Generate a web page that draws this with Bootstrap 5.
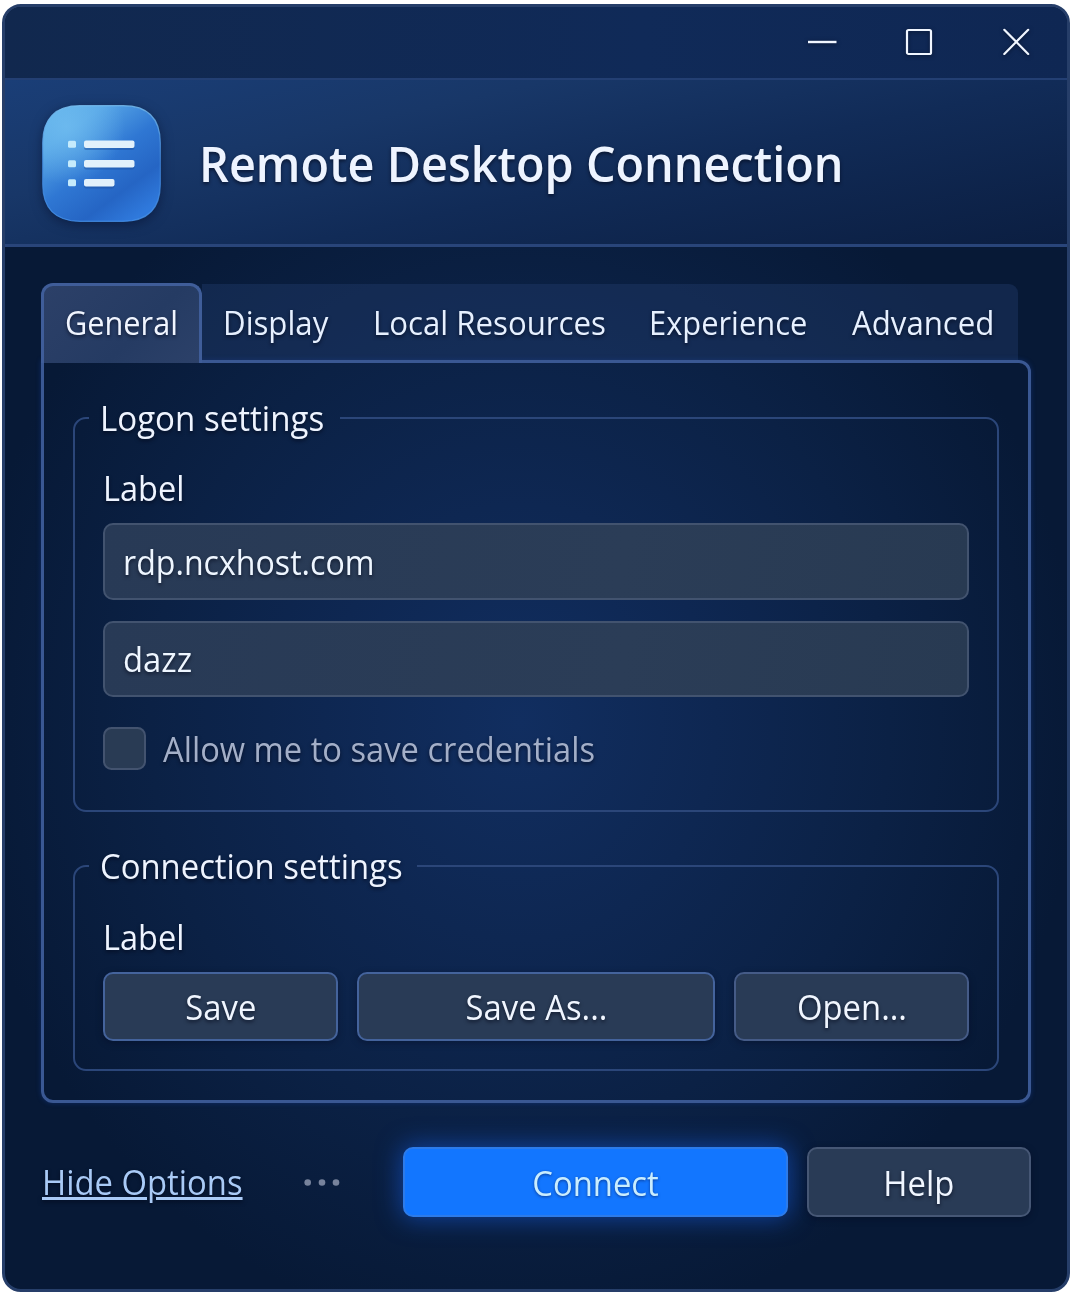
<!DOCTYPE html>
<html lang="en">
<head>
<meta charset="utf-8">
<meta name="viewport" content="width=device-width, initial-scale=1">
<title>Remote Desktop Connection</title>
<link href="https://cdn.jsdelivr.net/npm/bootstrap@5.3.0/dist/css/bootstrap.min.css" rel="stylesheet">
<style>
body{background:#fff;font-family:"Open Sans","Noto Sans",sans-serif;color:#eef4ff;overflow:hidden}
.rdp-window{width:1068px;height:1288px;margin:4px 0 0 2px;border:3px solid #263e69;border-radius:19px;
 background:radial-gradient(ellipse 560px 620px at 515px 715px,#112e60 0,#0e2752 35%,#0b2145 66%,rgba(7,26,54,0) 100%),#071936}
/* Segoe-like proportions: slightly condensed glyphs */
.seg{display:inline-block;white-space:nowrap;line-height:1;transform:scaleX(.965);transform-origin:left center;text-shadow:0 2px 4px rgba(0,5,20,.6)}
.seg-c{transform-origin:center}
.seg-n{transform:scaleX(.945)}
.titlebar{height:73px;background:linear-gradient(90deg,#11284e,#102a58 60%,#0f2753);border-bottom:2px solid #233f73;padding:0 35px 2px 0;gap:67px}
.win-btn{width:30px;height:30px;padding:0;border:0;background:none;line-height:0;filter:drop-shadow(0 1px 2px rgba(0,5,20,.6))}
.hero{height:167px;border-bottom:3px solid #29457a;padding:2px 0 0 37px;gap:38px;
 background:linear-gradient(168deg,#1a3e77 0,#183768 30%,#112b57 58%,#0b1e41 100%)}
.hero h1{font-size:49px;font-weight:560;transform:scaleX(.955)}
.app-icon{filter:drop-shadow(0 3px 6px rgba(3,15,45,.55))}
.rdp-body{padding:36px 36px 0}
.rdp-tabs{height:77px;position:relative;z-index:1;font-size:33px;border:0}
.rdp-tabs .nav-link{color:#e6f0ff;padding:2px 0 0 21px;border:0;margin:0;height:76px;border-radius:0;background:none;text-align:left}
.rdp-tabs .nav-link.active{width:161px;height:80px;padding:0 0 3px 20.5px;border:3px solid #3f5d99;border-bottom:0;border-radius:12px 12px 0 0;color:#f0f5ff;
 background:linear-gradient(135deg,#2c4068,#253b63 60%,#2c4169)}
.rdp-tabs .active .seg{transform:scaleX(.93)}
.tabstrip{background:rgba(36,63,112,.38);border-top-right-radius:9px;margin-top:1px;height:76px}
.w-display{width:150px}.w-local{width:276px}.w-exp{width:202px}.rdp-tabs .w-adv{width:188px;padding-left:22px}
.w-exp .seg{transform:scaleX(.935)}
.panel{height:743px;border:3px solid #3a5893;border-radius:0 12px 12px 12px;padding:37px 29px 0;box-shadow:0 0 5px rgba(25,70,170,.4)}
.group{border:2px solid #2b4679;border-radius:13px;padding:0 28px;height:412px;font-size:35px}
.group legend{float:none;font-size:35px;line-height:35px;height:35px;margin:0 0 0 -14px;padding:0 0 0 11px;width:251px;overflow:visible}
.group-conn{height:223px;margin-top:36px}
.group-conn legend{width:328px}
.group-conn legend .seg{transform:scaleX(.938)}
.field-label{display:block;line-height:0;margin:35px 0 18px}
.field-label .seg{transform:scaleX(.93)}
.group-conn .field-label{margin-top:36px}
.field{height:77px;border:2px solid #42536f;border-radius:10px;background:linear-gradient(100deg,#283a56,#2b3d57 60%,#283a52);padding:0 0 0 18px;font-size:34px;color:#eef6ff}
.field+.field{margin-top:21px;height:76px}
.rdp-check{width:43px;height:43px;margin:0 17px 0 0;border:2px solid #43536f;border-radius:10px;background:#293b54;opacity:1!important}
.check-line{margin-top:30px;font-size:34px;color:#a3afc8}
.check-line .seg{transform:scaleX(.961)}
.btn-rdp{--bs-btn-color:#f0f6ff;--bs-btn-bg:#293b56;--bs-btn-border-color:#44639c;--bs-btn-border-width:2px;--bs-btn-border-radius:10px;--bs-btn-padding-y:0;--bs-btn-padding-x:0;--bs-btn-font-size:34px;
 --bs-btn-hover-bg:#33486a;--bs-btn-hover-color:#fff;--bs-btn-hover-border-color:#5577b5;height:69px;line-height:0;box-shadow:0 2px 7px rgba(0,5,25,.35)}
.save-btn{width:235px}.saveas-btn{width:358px}
.open-btn{--bs-btn-border-color:#455b87}
.rdp-foot{margin-top:44px;height:70px;font-size:34px;padding-left:1px}
.hide-link{color:#a9caf6;text-decoration-thickness:2px;text-underline-offset:2px;width:262px;padding-top:1px}
.btn-connect{--bs-btn-bg:#1276ff;--bs-btn-border-color:#2d7be9;--bs-btn-color:#c9edff;width:385px;height:70px;margin-left:61px;box-shadow:0 0 24px 2px rgba(20,85,205,.65)}
.btn-help{--bs-btn-border-color:#465775;width:224px;height:70px;margin-left:19px}
.btn-connect .seg{text-shadow:0 1px 3px rgba(10,40,110,.7)}
.rdp-foot .btn-rdp{padding-top:2px}
</style>
</head>
<body>
<div class="rdp-window overflow-hidden">
  <div class="titlebar d-flex align-items-center justify-content-end">
    <button class="win-btn" aria-label="Minimize"><svg width="30" height="30" viewBox="0 0 30 30"><path d="M0 15h28.5" stroke="#f0f6ff" stroke-width="2.4"/></svg></button>
    <button class="win-btn" aria-label="Maximize"><svg width="30" height="30" viewBox="0 0 30 30"><rect x="2" y="3" width="24" height="24" rx="1.6" fill="none" stroke="#f0f6ff" stroke-width="2.2"/></svg></button>
    <button class="win-btn" aria-label="Close"><svg width="30" height="30" viewBox="0 0 30 30"><path d="M2.3 2.8 26.2 26.9M26.2 2.8 2.3 26.9" stroke="#f0f6ff" stroke-width="2.2" stroke-linecap="round"/></svg></button>
  </div>
  <header class="hero d-flex align-items-center">
    <svg class="app-icon flex-shrink-0" width="119" height="117" viewBox="0 0 119 117">
      <defs>
        <linearGradient id="tile" x1="0" y1="0" x2=".75" y2="1"><stop offset="0" stop-color="#62b4ea"/><stop offset=".25" stop-color="#56a5e6"/><stop offset=".55" stop-color="#2f77d3"/><stop offset=".8" stop-color="#2565c4"/><stop offset="1" stop-color="#2f79dc"/></linearGradient>
        <radialGradient id="gloss" cx=".2" cy=".18" r=".5"><stop offset="0" stop-color="#70bdf0" stop-opacity=".8"/><stop offset="1" stop-color="#70bdf0" stop-opacity="0"/></radialGradient>
        <linearGradient id="rim" x1="0" y1="0" x2="0" y2="1"><stop offset="0" stop-color="#7cc3f4"/><stop offset=".5" stop-color="#3f86da"/><stop offset="1" stop-color="#4794ec"/></linearGradient>
      </defs>
      <path d="M38 .7H81C106 .7 118.3 14 118.3 38V79C118.3 103 106 116.3 81 116.3H38C13 116.3 .7 103 .7 79V38C.7 14 13 .7 38 .7Z" fill="url(#tile)"/>
      <path d="M38 .7H81C106 .7 118.3 14 118.3 38V79C118.3 103 106 116.3 81 116.3H38C13 116.3 .7 103 .7 79V38C.7 14 13 .7 38 .7Z" fill="url(#gloss)" stroke="url(#rim)" stroke-width="1.2" stroke-opacity=".8"/>
      <g fill="#1d4f9e" opacity=".45" transform="translate(0 1.5)"><rect x="42" y="35.5" width="50.5" height="8" rx="2"/><rect x="42" y="55" width="50.5" height="8" rx="2"/><rect x="42" y="74" width="30.5" height="8" rx="2"/></g>
      <g fill="#e2f1fb"><rect x="42" y="35.5" width="50.5" height="7.6" rx="2"/><rect x="42" y="55" width="50.5" height="7.6" rx="2"/><rect x="42" y="74" width="30.5" height="7.6" rx="2"/></g>
      <g fill="#c5ebfc"><rect x="26" y="35.7" width="8" height="7" rx="1.5"/><rect x="26" y="55.2" width="8" height="7" rx="1.5"/><rect x="26" y="74.2" width="8" height="7" rx="1.5"/></g>
    </svg>
    <h1 class="seg mb-0">Remote Desktop Connection</h1>
  </header>
  <main class="rdp-body">
    <div class="rdp-tabs nav nav-tabs flex-nowrap align-items-start">
      <button class="nav-link active"><span class="seg seg-n">General</span></button>
      <div class="tabstrip d-flex">
        <button class="nav-link w-display"><span class="seg seg-n">Display</span></button>
        <button class="nav-link w-local"><span class="seg seg-n">Local Resources</span></button>
        <button class="nav-link w-exp"><span class="seg seg-n">Experience</span></button>
        <button class="nav-link w-adv"><span class="seg seg-n">Advanced</span></button>
      </div>
    </div>
    <section class="panel">
      <fieldset class="group">
        <legend><span class="seg seg-n">Logon settings</span></legend>
        <label class="field-label"><span class="seg seg-n">Label</span></label>
        <div class="field d-flex align-items-center"><span class="seg seg-n">rdp.ncxhost.com</span></div>
        <div class="field d-flex align-items-center"><span class="seg">dazz</span></div>
        <div class="check-line d-flex align-items-center">
          <input class="form-check-input rdp-check" type="checkbox" disabled aria-label="Allow me to save credentials">
          <span class="seg">Allow me to save credentials</span>
        </div>
      </fieldset>
      <fieldset class="group group-conn">
        <legend><span class="seg seg-n">Connection settings</span></legend>
        <label class="field-label"><span class="seg seg-n">Label</span></label>
        <div class="d-flex justify-content-between">
          <button class="btn btn-rdp save-btn"><span class="seg seg-c">Save</span></button>
          <button class="btn btn-rdp saveas-btn"><span class="seg seg-c">Save As...</span></button>
          <button class="btn btn-rdp save-btn open-btn"><span class="seg seg-c">Open...</span></button>
        </div>
      </fieldset>
    </section>
    <footer class="rdp-foot d-flex align-items-center">
      <a href="#" class="hide-link text-decoration-none"><span class="seg text-decoration-underline">Hide Options</span></a>
      <svg width="38" height="8" viewBox="0 0 38 8" fill="#77839c"><circle cx="3.7" cy="4.5" r="3.3"/><circle cx="18" cy="4.5" r="3.3"/><circle cx="32" cy="4.5" r="3.3"/></svg>
      <button class="btn btn-rdp btn-connect"><span class="seg seg-c">Connect</span></button>
      <button class="btn btn-rdp btn-help"><span class="seg seg-c">Help</span></button>
    </footer>
  </main>
</div>
<script src="https://cdn.jsdelivr.net/npm/bootstrap@5.3.0/dist/js/bootstrap.bundle.min.js"></script>
</body>
</html>
